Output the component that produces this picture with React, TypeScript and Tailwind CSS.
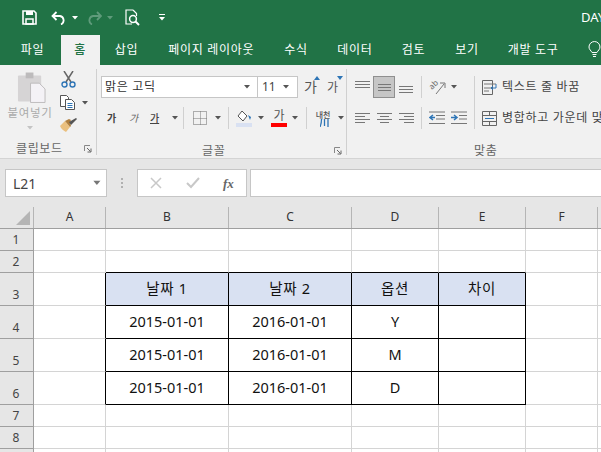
import React from 'react';

const FONT = "font-['Noto_Sans','Noto_Sans_CJK_KR',sans-serif]";

const tabs = [
  { label: '파일', w: 'w-[57px]' },
  { label: '홈', w: 'w-[39px]', active: true },
  { label: '삽입', w: 'w-[54px]' },
  { label: '페이지 레이아웃', w: 'w-[116px]' },
  { label: '수식', w: 'w-[54px]' },
  { label: '데이터', w: 'w-[64px]' },
  { label: '검토', w: 'w-[54px]' },
  { label: '보기', w: 'w-[53px]' },
  { label: '개발 도구', w: 'w-[80px]' },
];

const Caret = ({ className = '', color = '#555' }: { className?: string; color?: string }) => (
  <svg width="7" height="4" viewBox="0 0 7 4" className={`shrink-0 ${className}`}>
    <path d="M0 0h6L3 3.5z" fill={color} />
  </svg>
);

// horizontal lines for the alignment buttons
const Lines = ({ rows, w = 15 }: { rows: [number, number, number][]; w?: number }) => (
  <svg width={w} height="14" viewBox={`0 0 ${w} 14`} className="shrink-0">
    {rows.map(([x, y, l], i) => (
      <rect key={i} x={x} y={y} width={l} height="1" fill="#777" />
    ))}
  </svg>
);

const Launcher = ({ className = '' }: { className?: string }) => (
  <svg width="8" height="8" viewBox="0 0 8 8" className={`shrink-0 ${className}`}>
    <path d="M.5 6V.5H6" stroke="#888" fill="none" />
    <path d="M3 3l3.5 3.5M7 3.5V7H3.5" stroke="#666" fill="none" />
  </svg>
);

const VSep = ({ className = '' }: { className?: string }) => (
  <div className={`w-px bg-[#d0d0d0] shrink-0 ${className}`} />
);

const TitleBar = () => (
  <div className="h-[65px] bg-[#217346] text-white flex flex-col">
    <div className="h-[35px] flex items-center pl-[22px] relative">
      <svg width="15" height="15" viewBox="0 0 15 15">
        <path d="M1 1h11l2 2v11H1z" fill="none" stroke="#fff" strokeWidth="1.6" />
        <rect x="4" y="1" width="7" height="4" fill="#fff" />
        <rect x="4" y="9" width="7" height="5" fill="none" stroke="#fff" strokeWidth="1.5" />
      </svg>
      <svg width="16" height="14" viewBox="0 0 16 14" className="ml-[14px]">
        <path d="M5.500 1L1.500 5l4 4" fill="none" stroke="#fff" strokeWidth="1.8" />
        <path d="M2 5h7a4.500 4.500 0 0 1 1 8.500" fill="none" stroke="#fff" strokeWidth="1.8" />
      </svg>
      <Caret color="#fff" className="ml-[5px]" />
      <svg width="15" height="14" viewBox="0 0 15 14" className="ml-[8px]">
        <path d="M10 1l4 4-4 4" fill="none" stroke="#5f9b7b" strokeWidth="1.8" />
        <path d="M13.500 5H6a4.500 4.500 0 0 0-1 8.500" fill="none" stroke="#5f9b7b" strokeWidth="1.8" />
      </svg>
      <Caret color="#5f9b7b" className="ml-[5px]" />
      <svg width="16" height="17" viewBox="0 0 16 17" className="ml-[11px]">
        <path d="M8 1H1v14h6M8 1l3.500 3.500V7" fill="none" stroke="#fff" strokeWidth="1.2" />
        <circle cx="8" cy="10" r="3.4" fill="none" stroke="#fff" strokeWidth="1.5" />
        <path d="M10.500 12.500l3.500 3.500" stroke="#fff" strokeWidth="2" />
      </svg>
      <svg width="6" height="7" viewBox="0 0 6 7" className="ml-[18px]">
        <rect width="6" height="1" fill="#fff" />
        <path d="M0 3h6L3 6.500z" fill="#fff" />
      </svg>
      <span className="ml-auto text-[13px] leading-none w-[20px] overflow-hidden whitespace-nowrap">DAY</span>
    </div>
    <div className="flex-1 flex pl-[4px]">
      {tabs.map((t) => (
        <div
          key={t.label}
          className={`${t.w} flex items-center justify-center text-[12px] tracking-[0.7px] whitespace-nowrap ${
            t.active ? 'bg-[#f1f1f1] text-[#217346] font-medium' : 'text-white'
          }`}
        >
          {t.label}
        </div>
      ))}
      <svg width="13" height="17" viewBox="0 0 13 17" className="ml-[15px] mt-[6px]">
        <path d="M4 11.500C3 9.500 1 8.500 1 6a5.500 5.500 0 0 1 11 0c0 2.500-2 3.500-3 5.500z" fill="none" stroke="#fff" />
        <path d="M4.500 13.500h4M5 15.500h3" stroke="#fff" />
      </svg>
    </div>
  </div>
);

const Clipboard = () => (
  <div className="w-[97px] flex flex-col border-r border-[#d0d0d0] mt-[4px] mb-[3px]">
    <div className="flex h-[71px] mt-[3px]">
      <div className="w-[60px] flex flex-col items-center shrink-0">
        <svg width="29" height="31" viewBox="0 0 30 31" className="ml-[3px]">
          <rect x="1" y="3" width="24" height="27" rx="1" fill="#d6d4d5" />
          <rect x="9" y="0" width="8" height="6" fill="#bdbbbc" />
          <path d="M14 11h9l6 6v14H14z" fill="#f4f2f6" stroke="#bdbbbc" />
        </svg>
        <span className="text-[11.5px] leading-none text-[#aaa] mt-[4px] tracking-[0.7px] whitespace-nowrap">붙여넣기</span>
        <Caret color="#c4c4c4" className="mt-[7px]" />
      </div>
      <div className="flex flex-col -mt-[1px]">
        <svg width="15" height="17" viewBox="0 0 15 17" className="ml-[1px] shrink-0">
          <path d="M3 0l7 11M12 0L5 11" stroke="#666" strokeWidth="1.5" />
          <circle cx="3.500" cy="13.500" r="2.500" fill="none" stroke="#2e75b6" strokeWidth="1.4" />
          <circle cx="11.500" cy="13.500" r="2.500" fill="none" stroke="#2e75b6" strokeWidth="1.4" />
        </svg>
        <div className="flex items-center mt-[7px]">
          <svg width="16" height="15" viewBox="0 0 16 15" className="shrink-0">
            <path d="M.5.500h6l2 2v9h-8z" fill="#fff" stroke="#555" />
            <path d="M5.500 4.500h6l3 3v7h-9z" fill="#fff" stroke="#555" />
            <path d="M7.500 8.500h5M7.500 10.500h5M7.500 12.500h5" stroke="#2e75b6" />
          </svg>
          <Caret className="ml-[6px]" />
        </div>
        <svg width="17" height="14" viewBox="0 0 17 14" className="mt-[8px] shrink-0">
          <path d="M0 8l5-5 5 6-4 5C4 13 1 11 0 8z" fill="#eac07f" />
          <path d="M5 3l4-2 2 1-1 2 1 4-1 1z" fill="#b08040" />
          <path d="M9 4l7-4 1 1-6 6z" fill="#555" />
        </svg>
      </div>
    </div>
    <div className="flex-1 flex items-center pl-[16px] pr-[4px] pt-[3px]">
      <span className="text-[12px] leading-none text-[#666] tracking-[0.6px]">클립보드</span>
      <Launcher className="ml-auto" />
    </div>
  </div>
);

const Font = () => (
  <div className="w-[250px] flex flex-col border-r border-[#d0d0d0] mt-[4px] mb-[3px]">
    <div className="flex items-center pl-[4px] mt-[7px]">
      <div className="w-[157px] h-[22px] bg-white border border-[#c6c6c6] flex items-center px-[3px]">
        <span className="text-[12px] text-[#333] tracking-[0.7px]">맑은 고딕</span>
        <Caret className="ml-auto mr-[3px]" />
      </div>
      <div className="w-[40px] h-[22px] bg-white border border-l-0 border-[#c6c6c6] flex items-center px-[4px]">
        <span className="text-[12px] text-[#444]">11</span>
        <Caret className="ml-auto mr-[3px]" />
      </div>
      <div className="relative ml-[6px] w-[15px] text-[14px] leading-none text-[#555]">
        가
        <svg width="6" height="4" viewBox="0 0 6 4" className="absolute right-[-1px] top-[-4px]">
          <path d="M0 4h6L3 0z" fill="#2e75b6" />
        </svg>
      </div>
      <div className="relative ml-[8px] w-[13px] text-[12px] leading-none text-[#555] mt-[2px]">
        가
        <svg width="6" height="4" viewBox="0 0 6 4" className="absolute right-[-3px] top-[-6px]">
          <path d="M0 0h6L3 4z" fill="#2e75b6" />
        </svg>
      </div>
    </div>
    <div className="flex items-center h-[22px] mt-[9px] pl-[10px] text-[#444]">
      <span className="text-[10px] font-bold w-[22px]">가</span>
      <span className="text-[10px] italic w-[21px] text-[#666]">가</span>
      <span className="text-[10px] font-medium underline w-[22px]">가</span>
      <Caret />
      <VSep className="h-[22px] ml-[4px]" />
      <svg width="14" height="14" viewBox="0 0 14 14" className="ml-[9px] shrink-0">
        <path d="M.5.500h13v13H.5z" fill="none" stroke="#666" strokeDasharray="1 1" />
        <path d="M7.500 .5v13M.5 7.500h13" stroke="#777" strokeDasharray="1 1" />
      </svg>
      <Caret className="ml-[8px]" />
      <VSep className="h-[22px] ml-[6px]" />
      <div className="flex flex-col items-start ml-[7px] shrink-0">
        <svg width="16" height="12" viewBox="0 0 16 12">
          <path d="M6 1l5 5-4 5-5-5z" fill="#fff" stroke="#555" />
          <path d="M12 5l3 2-1 3z" fill="#2e75b6" />
        </svg>
        <div className="w-[16px] h-[4px] bg-[#d9e1f2] mt-[1px]" />
      </div>
      <Caret className="ml-[6px]" />
      <div className="flex flex-col items-center w-[16px] ml-[6px] shrink-0">
        <span className="text-[12px] leading-[13px] text-[#555]">가</span>
        <div className="w-[16px] h-[4px] bg-[#ff0000] mt-[1px]" />
      </div>
      <Caret className="ml-[5px]" />
      <VSep className="h-[22px] ml-[7px]" />
      <div className="flex flex-col items-center ml-[7px] w-[18px] shrink-0">
        <span className="text-[8px] leading-[9px] text-[#555] font-medium whitespace-nowrap">내천</span>
        <svg width="9" height="8" viewBox="0 0 9 8" className="ml-[3px]">
          <path d="M1.500 0c0 3.500-.3 5.500-1.500 8M4.500 0v7M8 0v8" fill="none" stroke="#2e75b6" strokeWidth="1.300" />
        </svg>
      </div>
      <Caret className="ml-[6px]" />
    </div>
    <div className="flex-1 flex items-center pl-[105px] pr-[4px] pt-[16px]">
      <span className="text-[12px] leading-none text-[#666] tracking-[0.6px]">글꼴</span>
      <Launcher className="ml-auto -mt-[1px]" />
    </div>
  </div>
);

const Alignment = () => (
  <div className="flex-1 flex flex-col mt-[4px] mb-[3px] min-w-0">
    <div className="flex items-center h-[22px] mt-[7px] pl-[8px]">
      <Lines rows={[[0, 1, 15], [0, 4, 15], [0, 7, 15]]} />
      <div className="w-[22px] h-[22px] ml-[3px] bg-[#c6c6c6] border border-[#8f8f8f] flex items-center justify-center shrink-0">
        <Lines rows={[[1, 4, 13], [1, 7, 13], [1, 10, 13]]} />
      </div>
      <div className="ml-[4px] flex shrink-0">
        <Lines w={14} rows={[[0, 6, 14], [0, 9, 14], [0, 12, 14]]} />
      </div>
      <VSep className="h-[22px] ml-[8px]" />
      <svg width="18" height="16" viewBox="0 0 18 16" className="ml-[7px] shrink-0 overflow-visible">
        <text x="3" y="11" fontSize="8" fill="#666" transform="rotate(-45 3 11)">ab</text>
        <path d="M7 15L15 5M11 4h5v5" stroke="#777" fill="none" />
      </svg>
      <Caret className="ml-[4px]" />
      <VSep className="h-[31px] ml-[16px] self-start" />
      <svg width="15" height="15" viewBox="0 0 15 15" className="ml-[7px] shrink-0">
        <path d="M.5.500h10v14H.5z" fill="none" stroke="#666" />
        <path d="M2 4h12M2 8h7M2 11h5" stroke="#777" />
        <path d="M14 4v4h-4M11 6l-2 2 2 2" stroke="#2e75b6" fill="none" />
      </svg>
      <span className="text-[12px] text-[#444] ml-[5px] tracking-[0.7px] whitespace-nowrap">텍스트 줄 바꿈</span>
    </div>
    <div className="flex items-center h-[22px] mt-[9px] pl-[8px] whitespace-nowrap">
      <Lines w={15} rows={[[0, 2, 15], [0, 5, 10], [0, 8, 15], [0, 11, 10]]} />
      <div className="ml-[7px] flex shrink-0">
        <Lines w={15} rows={[[0, 2, 15], [3, 5, 9], [0, 8, 15], [3, 11, 9]]} />
      </div>
      <div className="ml-[7px] flex shrink-0">
        <Lines w={15} rows={[[0, 2, 15], [5, 5, 10], [0, 8, 15], [5, 11, 10]]} />
      </div>
      <VSep className="h-[22px] ml-[7px]" />
      <svg width="16" height="14" viewBox="0 0 16 14" className="ml-[7px] shrink-0">
        <path d="M0 1h16M7 4.500h9M7 8h9M0 12.500h16" stroke="#777" />
        <path d="M6 6.500H2M4 4L1 6.500 4 9" stroke="#2e75b6" strokeWidth="1.500" fill="none" />
      </svg>
      <svg width="16" height="14" viewBox="0 0 16 14" className="ml-[6px] shrink-0">
        <path d="M0 1h16M8 4.500h8M8 8h8M0 12.500h16" stroke="#777" />
        <path d="M0 6.500h5M3 4l3 2.500L3 9" stroke="#2e75b6" strokeWidth="1.500" fill="none" />
      </svg>
      <VSep className="h-[22px] ml-[7px]" />
      <svg width="15" height="15" viewBox="0 0 15 15" className="ml-[7px] shrink-0">
        <path d="M.5.500h14v14H.5zM.5 4.500h14M.5 10.500h14M7.500.5v4M7.500 10.500v4" fill="none" stroke="#666" />
        <path d="M3 7.500h9" stroke="#2e75b6" />
      </svg>
      <span className="text-[12px] text-[#444] ml-[5px] tracking-[0.7px]">병합하고 가운데 맞춤</span>
    </div>
    <div className="flex-1 flex items-center pl-[127px] pt-[16px]">
      <span className="text-[12px] leading-none text-[#666] tracking-[0.6px]">맞춤</span>
    </div>
  </div>
);

const Ribbon = () => (
  <div className="h-[94px] bg-[#f1f1f1] border-b border-[#d4d4d4] flex overflow-hidden">
    <Clipboard />
    <Font />
    <Alignment />
  </div>
);

const FormulaBar = () => (
  <div className="h-[48px] bg-[#e6e6e6] flex items-start pt-[10px] pl-[5px]">
    <div className="w-[102px] h-[28px] bg-white border border-[#c6c6c6] flex items-center pl-[7px] pr-[5px]">
      <span className="text-[14px] text-[#444]">L21</span>
      <Caret color="#777" className="ml-auto scale-125" />
    </div>
    <div className="w-[30px] h-[28px] flex flex-col items-center justify-center gap-[2px]">
      <div className="w-[2px] h-[2px] bg-[#b0b0b0]" />
      <div className="w-[2px] h-[2px] bg-[#b0b0b0]" />
      <div className="w-[2px] h-[2px] bg-[#b0b0b0]" />
    </div>
    <div className="w-[110px] h-[28px] bg-white border border-[#c6c6c6] flex items-center pl-[12px]">
      <svg width="12" height="12" viewBox="0 0 12 12">
        <path d="M1 1l10 10M11 1L1 11" stroke="#c8c8c8" strokeWidth="1.500" />
      </svg>
      <svg width="14" height="12" viewBox="0 0 14 12" className="ml-[24px]">
        <path d="M1 6l4 4 8-9" stroke="#c8c8c8" strokeWidth="2" fill="none" />
      </svg>
      <span className="ml-[23px] font-['Liberation_Serif',serif] italic font-bold text-[13px] leading-none text-[#666]">fx</span>
    </div>
    <div className="ml-[3px] flex-1 h-[28px] bg-white border-y border-l border-[#c6c6c6]" />
  </div>
);

const colWidths = 'grid-cols-[34px_72px_123px_123px_87px_87px_72px_3px]';
const rowHeights = [22, 22, 33, 33, 33, 33, 22, 22, 22];
const rowClass: Record<number, string> = { 22: 'h-[22px]', 33: 'h-[33px]' };

const table: Record<number, string[]> = {
  3: ['날짜 1', '날짜 2', '옵션', '차이'],
  4: ['2015-01-01', '2016-01-01', 'Y', ''],
  5: ['2015-01-01', '2016-01-01', 'M', ''],
  6: ['2015-01-01', '2016-01-01', 'D', ''],
};

const Sheet = () => (
  <div className="bg-white">
    <div className={`grid ${colWidths} h-[22px] bg-[#e6e6e6] border-b border-[#9f9f9f]`}>
      <div className="flex items-end justify-end pr-[3px] pb-[3px] border-r border-[#b5b5b5]">
        <svg width="14" height="14" viewBox="0 0 14 14">
          <path d="M14 0v14H0z" fill="#b5b5b5" />
        </svg>
      </div>
      {['A', 'B', 'C', 'D', 'E', 'F'].map((c) => (
        <div key={c} className="flex items-center justify-center border-r border-[#b5b5b5] text-[12px] text-[#333] pb-[1px]">
          {c}
        </div>
      ))}
      <div />
    </div>
    <div className={`grid ${colWidths}`}>
      {rowHeights.map((h, i) => {
        const row = i + 1;
        const data = table[row];
        const aboveTable = row === 2;
        return (
          <React.Fragment key={row}>
            <div
              className={`${rowClass[h]} bg-[#e6e6e6] border-r border-b border-[#9f9f9f] flex items-end justify-center pr-[1px] text-[12px] leading-[20px] text-[#444]`}
            >
              {row < 9 ? row : ''}
            </div>
            <div className={`${rowClass[h]} border-b border-[#d4d4d4] border-r ${data ? 'border-r-black' : ''}`} />
            {[0, 1, 2, 3].map((c) => (
              <div
                key={c}
                className={`${rowClass[h]} border-r border-b flex items-center justify-center text-[14.5px] text-[#111] ${
                  data ? 'border-black' : aboveTable ? 'border-r-[#d4d4d4] border-b-black' : 'border-[#d4d4d4]'
                } ${row === 3 ? 'bg-[#d9e1f2] tracking-[0.7px]' : ''}`}
              >
                {data ? data[c] : ''}
              </div>
            ))}
            <div className={`${rowClass[h]} border-r border-b border-[#d4d4d4]`} />
            <div className={`${rowClass[h]} border-b border-[#d4d4d4]`} />
          </React.Fragment>
        );
      })}
    </div>
  </div>
);

const App: React.FC = () => {
  return (
    <div className={`w-[601px] h-[452px] overflow-hidden bg-white ${FONT}`}>
      <TitleBar />
      <Ribbon />
      <FormulaBar />
      <Sheet />
    </div>
  );
};

export default App;
